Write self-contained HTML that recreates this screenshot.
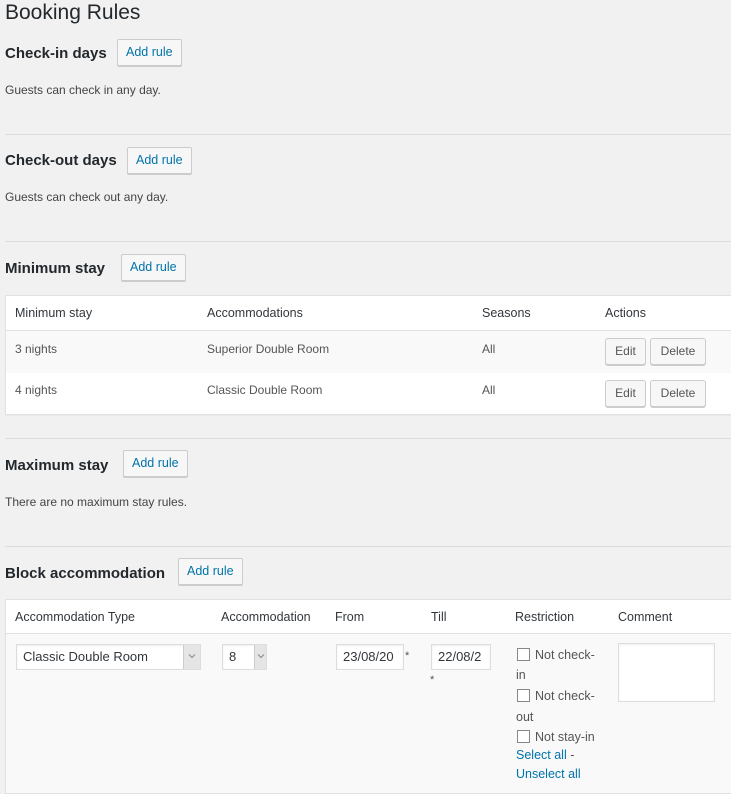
<!DOCTYPE html>
<html><head><meta charset="utf-8"><style>
*{box-sizing:border-box;margin:0;padding:0}
body{width:731px;height:793px;background:#f1f1f1;font-family:"Liberation Sans",sans-serif;color:#444;position:relative;overflow:hidden;font-size:12.5px}
.a{position:absolute;white-space:nowrap}
h1{position:absolute;left:5px;top:1px;font-size:21px;font-weight:400;color:#23282d}
h2{position:absolute;left:5px;font-size:15px;font-weight:700;color:#23282d}
.btn{position:absolute;height:27px;border:1px solid #ccc;background:#f7f7f7;color:#0073aa;font-size:12.5px;line-height:25px;padding:0 8px;border-radius:2px;box-shadow:0 1px 0 #ccc}
.hr{position:absolute;left:5px;right:0;height:1px;background:#ddd}
.p{font-size:12px;color:#444}
.tbl{position:absolute;left:5px;right:-5px;border:1px solid #e1e1e1;background:#fff;box-shadow:0 1px 1px rgba(0,0,0,.04)}
.th{color:#32373c;font-size:12.5px}
.td{color:#555;font-size:12px}
.sb{position:absolute;height:27px;border:1px solid #ccc;background:#f7f7f7;color:#555;font-size:12px;line-height:25px;text-align:center;border-radius:3px;box-shadow:0 1px 0 #ccc}
.in{position:absolute;background:#fff;border:1px solid #ddd;box-shadow:inset 0 1px 2px rgba(0,0,0,.07);font-size:13px;color:#32373c;line-height:24px;padding-left:6px;overflow:hidden}
.cb{position:absolute;width:13px;height:13px;border:1px solid #888;background:#fff}
.lk{color:#0073aa}
.ar{position:absolute;right:0;top:0;height:24px;background:#e5e5e5;border-left:1px solid #ccc}
.ar svg{position:absolute;left:50%;top:8px;margin-left:-4px}
</style></head><body>
<h1>Booking Rules</h1>

<h2 style="top:45px">Check-in days</h2>
<div class="btn" style="left:117px;top:39px">Add rule</div>
<div class="a p" style="left:5px;top:83px">Guests can check in any day.</div>
<div class="hr" style="top:134px"></div>

<h2 style="top:152px">Check-out days</h2>
<div class="btn" style="left:127px;top:147px">Add rule</div>
<div class="a p" style="left:5px;top:190px">Guests can check out any day.</div>
<div class="hr" style="top:241px"></div>

<h2 style="top:260px">Minimum stay</h2>
<div class="btn" style="left:121px;top:254px">Add rule</div>
<div class="tbl" style="top:295px;height:120px">
  <div style="position:absolute;left:0;right:0;top:34px;height:1px;background:#e1e1e1"></div>
  <div style="position:absolute;left:0;right:0;top:35px;height:42px;background:#f9f9f9"></div>
</div>
<div class="a th" style="left:15px;top:306px">Minimum stay</div>
<div class="a th" style="left:207px;top:306px">Accommodations</div>
<div class="a th" style="left:482px;top:306px">Seasons</div>
<div class="a th" style="left:605px;top:306px">Actions</div>
<div class="a td" style="left:15px;top:342px">3 nights</div>
<div class="a td" style="left:207px;top:342px">Superior Double Room</div>
<div class="a td" style="left:482px;top:342px">All</div>
<div class="sb" style="left:605px;top:338px;width:41px">Edit</div>
<div class="sb" style="left:650px;top:338px;width:56px">Delete</div>
<div class="a td" style="left:15px;top:383px">4 nights</div>
<div class="a td" style="left:207px;top:383px">Classic Double Room</div>
<div class="a td" style="left:482px;top:383px">All</div>
<div class="sb" style="left:605px;top:380px;width:41px">Edit</div>
<div class="sb" style="left:650px;top:380px;width:56px">Delete</div>
<div class="hr" style="top:438px"></div>

<h2 style="top:457px">Maximum stay</h2>
<div class="btn" style="left:123px;top:450px">Add rule</div>
<div class="a p" style="left:5px;top:495px">There are no maximum stay rules.</div>
<div class="hr" style="top:546px"></div>

<h2 style="top:565px">Block accommodation</h2>
<div class="btn" style="left:178px;top:558px">Add rule</div>
<div class="tbl" style="top:599px;height:195px;background:#f9f9f9">
  <div style="position:absolute;left:0;right:0;top:0;height:34px;background:#fff;border-bottom:1px solid #e1e1e1"></div>
</div>
<div class="a th" style="left:15px;top:610px">Accommodation Type</div>
<div class="a th" style="left:221px;top:610px">Accommodation</div>
<div class="a th" style="left:335px;top:610px">From</div>
<div class="a th" style="left:431px;top:610px">Till</div>
<div class="a th" style="left:515px;top:610px">Restriction</div>
<div class="a th" style="left:618px;top:610px">Comment</div>

<div class="in" style="left:16px;top:644px;width:185px;height:26px">Classic Double Room
  <div class="ar" style="width:17px"><svg width="8" height="6" viewBox="0 0 8 6"><path d="M1 1.5L4 4.5L7 1.5" fill="none" stroke="#888" stroke-width="1"/></svg></div></div>
<div class="in" style="left:222px;top:644px;width:45px;height:26px">8
  <div class="ar" style="width:12px"><svg width="8" height="6" viewBox="0 0 8 6"><path d="M1 1.5L4 4.5L7 1.5" fill="none" stroke="#888" stroke-width="1"/></svg></div></div>
<div class="in" style="left:336px;top:644px;width:68px;height:26px">23/08/20</div>
<div class="a" style="left:405px;top:650px;font-size:11px;color:#555">*</div>
<div class="in" style="left:431px;top:644px;width:60px;height:26px">22/08/2</div>
<div class="a" style="left:430px;top:674px;font-size:11px;color:#555">*</div>

<div class="cb" style="left:517px;top:648px"></div>
<div class="a td" style="left:535px;top:648px;font-size:12.5px">Not check-</div>
<div class="a td" style="left:516px;top:668px;font-size:12.5px">in</div>
<div class="cb" style="left:517px;top:689px"></div>
<div class="a td" style="left:535px;top:689px;font-size:12.5px">Not check-</div>
<div class="a td" style="left:516px;top:710px;font-size:12.5px">out</div>
<div class="cb" style="left:517px;top:730px"></div>
<div class="a td" style="left:535px;top:730px;font-size:12.5px">Not stay-in</div>
<div class="a lk" style="left:516px;top:748px;font-size:12.5px">Select all <span style="color:#555">-</span></div>
<div class="a lk" style="left:516px;top:767px;font-size:12.5px">Unselect all</div>

<div class="in" style="left:618px;top:643px;width:97px;height:59px"></div>
</body></html>
